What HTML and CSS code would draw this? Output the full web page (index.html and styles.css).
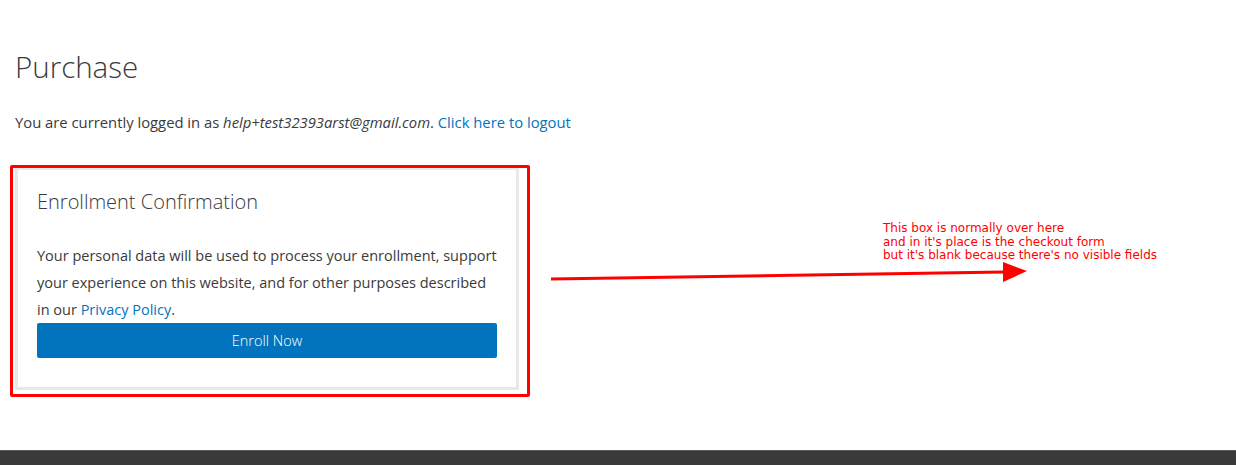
FILE: index.html
```html
<!DOCTYPE html>
<html lang="en">
<head>
<meta charset="utf-8">
<title>Purchase</title>
<link rel="stylesheet" href="styles.css">
</head>
<body>
<main class="page">
  <h1 class="title">Purchase</h1>
  <p class="login">You are currently logged in as <em>help+test32393arst@gmail.com</em>. <a href="#">Click here to logout</a></p>
  <div class="highlight">
    <section class="card">
      <h2 class="card-title">Enrollment Confirmation</h2>
      <p class="card-text">Your personal data will be used to process your enrollment, support your experience on this website, and for other purposes described in our <a href="#">Privacy Policy</a>.</p>
      <button class="btn">Enroll Now</button>
    </section>
  </div>
</main>
<svg class="arrow" width="1236" height="465" viewBox="0 0 1236 465">
  <line x1="551" y1="279" x2="1004" y2="272" stroke="#ff0000" stroke-width="3"/>
  <polygon points="1003,262 1027,271 1003,282" fill="#ff0000"/>
</svg>
<div class="note">This box is normally over here<br>and in it's place is the checkout form<br>but it's blank because there's no visible fields</div>
<footer class="footer"></footer>
</body>
</html>
```
FILE: styles.css
```css
html, body {
  margin: 0;
  padding: 0;
  background: #fff;
}
body {
  font-family: "Open Sans", "Noto Sans", sans-serif;
  color: #3a3a3a;
  height: 465px;
  position: relative;
  overflow: hidden;
}
.page {
  padding: 46px 0 0 15px;
  height: 404px;
  box-sizing: border-box;
}
.title {
  margin: 0;
  font-size: 29.5px;
  font-weight: 300;
  line-height: 42px;
  color: #3a3a3a;
}
.login {
  margin: 22px 0 0;
  font-size: 14.8px;
  line-height: 24px;
}
.login em {
  font-style: italic;
}
a {
  color: #0274be;
  text-decoration: none;
}
.highlight {
  margin: 31px 0 0 -5px;
  width: 504px;
  border: 3px solid #ff0000;
  border-radius: 2px;
  padding: 0 8px 4px 2px;
  box-sizing: content-box;
}
.card {
  border: 3px solid #e8e8e8;
  border-top-width: 2px;
  padding: 18px 19px 29px 19px;
}
.card-title {
  margin: 0 0 27px;
  font-size: 20px;
  font-weight: 300;
  line-height: 27px;
  color: #3a3a3a;
}
.card-text {
  margin: 0;
  font-size: 14.5px;
  line-height: 27px;
}
.btn {
  display: block;
  width: 100%;
  height: 35px;
  margin-top: 0;
  border: 0;
  border-radius: 2px;
  background: #0274be;
  color: #fff;
  font-family: inherit;
  font-size: 14.5px;
  font-weight: 300;
}
.arrow {
  position: absolute;
  left: 0;
  top: 0;
  pointer-events: none;
}
.note {
  position: absolute;
  left: 883px;
  top: 222px;
  font-family: "DejaVu Sans", sans-serif;
  font-size: 12px;
  line-height: 13.5px;
  color: #ff0000;
}
.footer {
  position: absolute;
  left: 0;
  right: 0;
  top: 450px;
  height: 15px;
  background: #3a3a3a;
  border-top: 1px solid #5c5c5c;
}
```
